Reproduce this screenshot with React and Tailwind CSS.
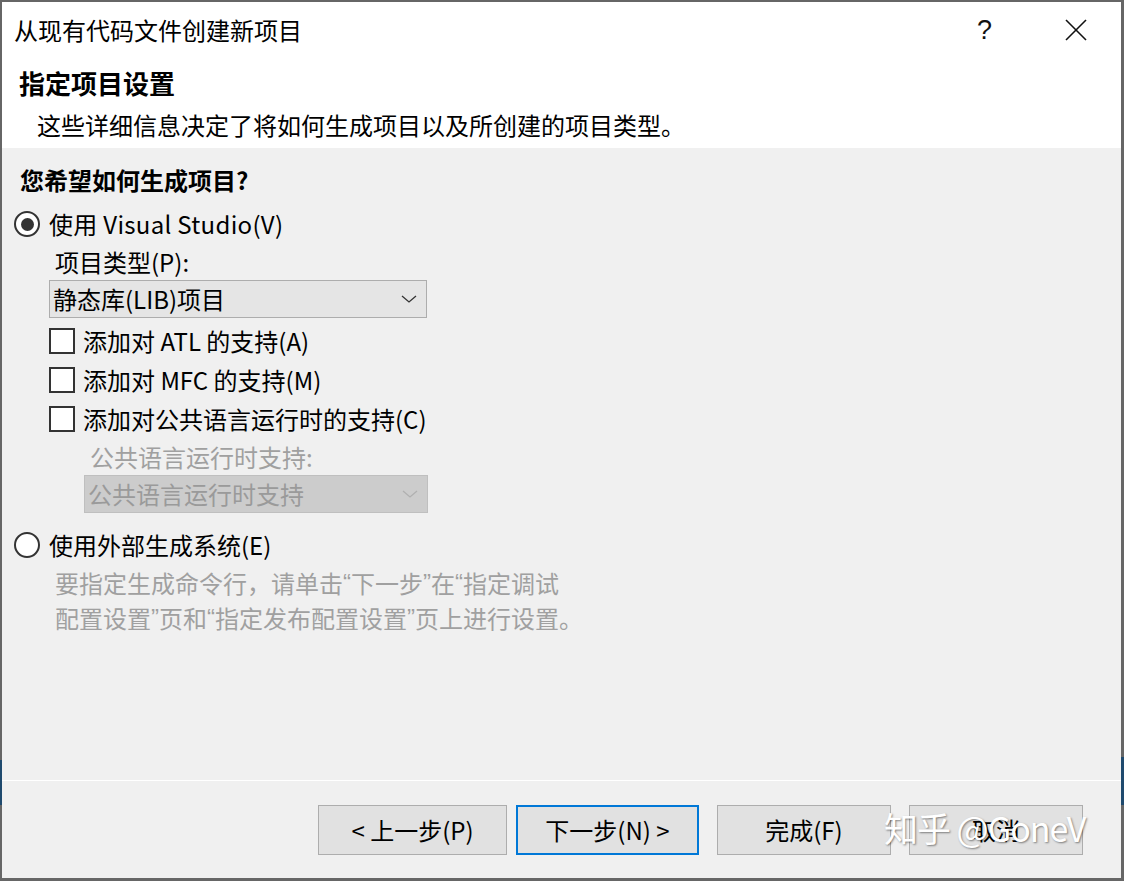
import React from "react";

const FONT = { fontFamily: '"Noto Sans CJK SC", "Noto Sans", sans-serif' };
const Q = ({ children }) => (
  <span style={{ fontFamily: '"Liberation Sans", sans-serif' }}>{children}</span>
);

function Radio({ checked }) {
  return (
    <div className="w-[26px] h-[26px] rounded-full border-2 border-[#333333] bg-white flex items-center justify-center shrink-0">
      {checked && <div className="w-[13px] h-[13px] rounded-full bg-[#333333]" />}
    </div>
  );
}

function Checkbox() {
  return <div className="w-[26px] h-[26px] border-2 border-[#333333] bg-white shrink-0" />;
}

function Chevron({ color = "#333333" }) {
  return (
    <svg width="16" height="8" viewBox="0 0 16 8" fill="none">
      <polyline points="1,1 8,7 15,1" stroke={color} strokeWidth="1.3" />
    </svg>
  );
}

function Button({ children, className = "", primary = false }) {
  return (
    <div
      className={
        "h-[50px] flex items-center justify-center bg-[#e1e1e1] text-[24px] text-black " +
        (primary ? "border-2 border-[#0078d7] " : "border border-[#adadad] ") +
        className
      }
    >
      {children}
    </div>
  );
}

export default function App() {
  return (
    <div
      className="relative w-[1124px] h-[881px] bg-[#666666] pt-[2px] pl-[2px] pr-[3px] pb-[3px] flex"
      style={FONT}
    >
      <div className="absolute left-0 top-[760px] w-[2px] h-[45px] bg-[#1f4a6e]" />
      <div className="absolute right-0 top-[757px] w-[3px] h-[48px] bg-[#1f4a6e]" />
      <div className="flex-1 flex flex-col bg-[#f0f0f0] overflow-hidden">
        {/* Title + header (white) */}
        <div className="bg-white h-[146px] flex flex-col">
          <div className="h-[56px] flex items-center pl-[12px] pr-[34px]">
            <div className="flex-1 text-[24px] leading-none text-black">从现有代码文件创建新项目</div>
            <div className="text-[27px] leading-none text-[#111] mr-[73px]" style={{ fontFamily: '"Liberation Sans", sans-serif' }}>?</div>
            <svg width="22" height="22" viewBox="0 0 22 22">
              <line x1="1" y1="1" x2="21" y2="21" stroke="#111" strokeWidth="1.6" />
              <line x1="21" y1="1" x2="1" y2="21" stroke="#111" strokeWidth="1.6" />
            </svg>
          </div>
          <div className="h-[50px] flex items-center pl-[17px] text-[26px] font-bold leading-none text-black">
            指定项目设置
          </div>
          <div className="h-[34px] flex items-center pl-[35px] text-[24px] leading-none text-black">
            这些详细信息决定了将如何生成项目以及所创建的项目类型。
          </div>
        </div>

        {/* Body */}
        <div className="flex-1 flex flex-col">
          <div className="mt-[12px] h-[40px] flex items-center pl-[18px] text-[24px] font-bold leading-none text-black">
            您希望如何生成项目?
          </div>
          <div className="h-[48px] flex items-center pl-[12px] gap-[9px] text-[24px] leading-none text-black">
            <Radio checked />
            <span className="tracking-[0.3px]">使用 Visual Studio(V)</span>
          </div>
          <div className="h-[28px] flex items-center pl-[53px] text-[24px] leading-none text-black">
            项目类型(P):
          </div>
          <div className="mt-[4px] ml-[47px] w-[378px] h-[38px] bg-[#e5e5e5] border border-[#adadad] flex items-center pl-[3px] pr-[9px] text-[24px] leading-none text-black">
            <span className="flex-1">静态库(LIB)项目</span>
            <Chevron />
          </div>
          <div className="mt-[3px] flex flex-col pl-[47px] text-[24px] leading-none text-black">
            <div className="h-[39px] flex items-center gap-[8px]">
              <Checkbox />
              <span>添加对 ATL 的支持(A)</span>
            </div>
            <div className="h-[39px] flex items-center gap-[8px]">
              <Checkbox />
              <span>添加对 MFC 的支持(M)</span>
            </div>
            <div className="h-[39px] flex items-center gap-[8px]">
              <Checkbox />
              <span>添加对公共语言运行时的支持(C)</span>
            </div>
          </div>
          <div className="h-[37px] flex items-center pl-[88px] text-[24px] leading-none text-[#a0a0a0]">
            公共语言运行时支持:
          </div>
          <div className="ml-[82px] w-[344px] h-[38px] bg-[#cccccc] border border-[#bfbfbf] flex items-center pl-[3px] pr-[9px] text-[24px] leading-none text-[#9a9a9a]">
            <span className="flex-1">公共语言运行时支持</span>
            <Chevron color="#b0b0b0" />
          </div>
          <div className="mt-[12px] h-[40px] flex items-center pl-[12px] gap-[9px] text-[24px] leading-none text-black">
            <Radio />
            <span>使用外部生成系统(E)</span>
          </div>
          <div className="pl-[53px] text-[24px] leading-none text-[#a0a0a0]">
            <div className="h-[35px] flex items-center whitespace-nowrap">
              要指定生成命令行，请单击<Q>“</Q>下一步<Q>”</Q>在<Q>“</Q>指定调试
            </div>
            <div className="h-[35px] flex items-center whitespace-nowrap">
              配置设置<Q>”</Q>页和<Q>“</Q>指定发布配置设置<Q>”</Q>页上进行设置。
            </div>
          </div>
          <div className="flex-1" />
          <div className="h-[1px] bg-white" />
          <div className="h-[97px] flex items-start justify-end pt-[24px] pr-[38px]">
            <Button className="w-[189px]">&lt; 上一步(P)</Button>
            <Button primary className="w-[183px] ml-[9px]">下一步(N) &gt;</Button>
            <Button className="w-[174px] ml-[18px]">完成(F)</Button>
            <Button className="w-[174px] ml-[18px]">取消</Button>
          </div>
        </div>
      </div>
      <div className="absolute left-[884px] top-[811px] text-[34px] leading-none tracking-[-1px] text-white [text-shadow:1px_1px_2px_rgba(0,0,0,0.45)] whitespace-nowrap">
        知乎 @GoneV
      </div>
    </div>
  );
}
